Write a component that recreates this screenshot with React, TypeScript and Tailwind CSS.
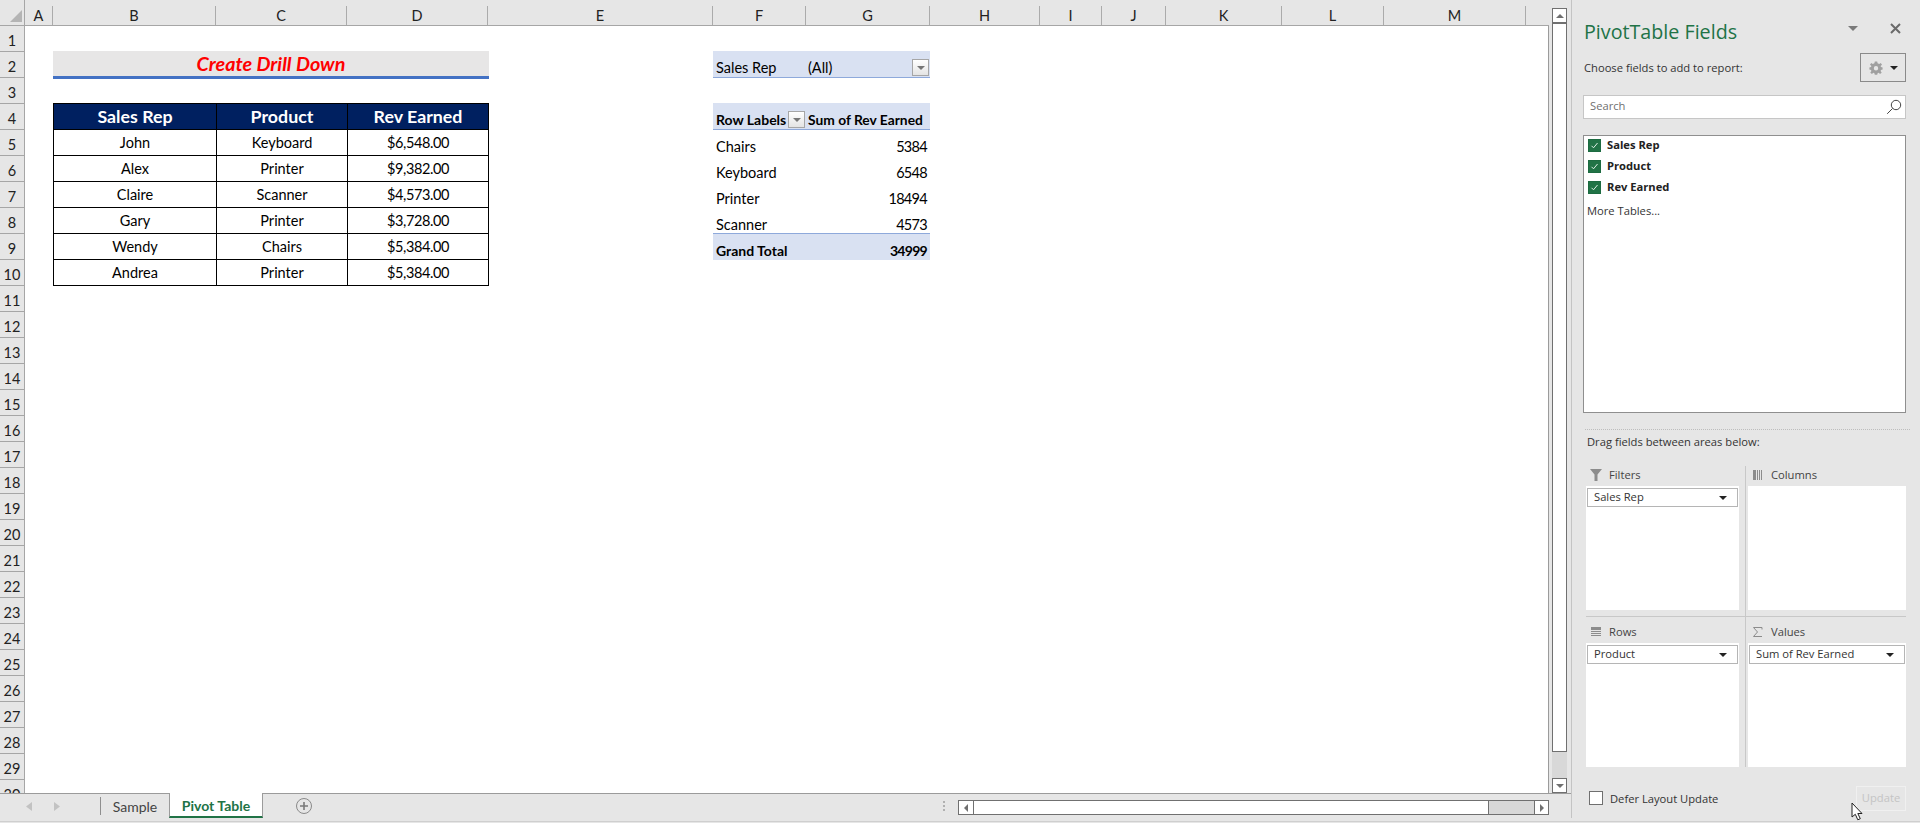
const calibri = "font-['Lato','Liberation_Sans',sans-serif]";
const segoe = "font-['Open_Sans','Noto_Sans',sans-serif]";

const columns = [
  { name: 'A', width: 28 },
  { name: 'B', width: 163 },
  { name: 'C', width: 131 },
  { name: 'D', width: 141 },
  { name: 'E', width: 225 },
  { name: 'F', width: 93 },
  { name: 'G', width: 124 },
  { name: 'H', width: 110 },
  { name: 'I', width: 62 },
  { name: 'J', width: 64 },
  { name: 'K', width: 116 },
  { name: 'L', width: 102 },
  { name: 'M', width: 142 },
];

const rows = Array.from({ length: 30 }, (_, i) => i + 1);

const sales = [
  ['John', 'Keyboard', '$6,548.00'],
  ['Alex', 'Printer', '$9,382.00'],
  ['Claire', 'Scanner', '$4,573.00'],
  ['Gary', 'Printer', '$3,728.00'],
  ['Wendy', 'Chairs', '$5,384.00'],
  ['Andrea', 'Printer', '$5,384.00'],
];

const pivot = [
  ['Chairs', '5384'],
  ['Keyboard', '6548'],
  ['Printer', '18494'],
  ['Scanner', '4573'],
];

const FilterButton = () => (
  <span className="flex h-[17px] w-[17px] shrink-0 items-center justify-center border border-[#a6a6a6] bg-gradient-to-b from-white to-[#e4e4e4]">
    <span className="h-0 w-0 border-x-[4px] border-t-[4px] border-x-transparent border-t-[#767676]" />
  </span>
);

const Caret = ({ color = 'border-t-[#222]' }: { color?: string }) => (
  <span className={`h-0 w-0 shrink-0 border-x-[4px] border-t-[4px] border-x-transparent ${color}`} />
);

const ScrollArrow = ({ dir }: { dir: 'up' | 'down' | 'left' | 'right' }) => {
  const points = {
    up: '1,7 9,7 5,3',
    down: '1,3 9,3 5,7',
    left: '7,1 7,9 3,5',
    right: '3,1 3,9 7,5',
  }[dir];
  return (
    <svg width="10" height="10" viewBox="0 0 10 10">
      <polygon points={points} fill="#6f6f6f" />
    </svg>
  );
};

const Gear = () => (
  <svg width="14" height="14" viewBox="0 0 14 14">
    <path
      d="M5.8 0.5 H8.2 L8.6 2.3 L10.2 3 L11.8 2 L13 3.7 L11.6 5 L12 6 L13.6 6.5 V8.5 L12 9 L11.6 10 L12.7 11.7 L11 13 L9.8 11.8 L8.6 12.3 L8.2 13.8 H5.8 L5.4 12.3 L4.2 11.8 L3 13 L1.3 11.7 L2.4 10 L2 9 L0.4 8.5 V6.5 L2 6 L2.4 5 L1 3.7 L2.2 2 L3.8 3 L5.4 2.3 Z M7 5 A2.2 2.2 0 1 0 7 9.4 A2.2 2.2 0 1 0 7 5 Z"
      fill="#a0a0a0"
      fillRule="evenodd"
    />
  </svg>
);

const FieldCheck = ({ label }: { label: string }) => (
  <div className="flex h-[21px] items-center gap-[6px] pl-[4px]">
    <span className="flex h-[13px] w-[13px] items-center justify-center border border-[#1d6b41] bg-[#217346]">
      <svg width="9" height="9" viewBox="0 0 9 9" fill="none">
        <path d="M1.5 4.8 L3.5 6.8 L7.5 2" stroke="#dff0e6" strokeWidth="1" />
      </svg>
    </span>
    <span className="text-[11.2px] font-bold text-[#222]">{label}</span>
  </div>
);

const AreaItem = ({ label }: { label: string }) => (
  <div className="mx-[1px] mt-[2px] flex h-[19px] items-center justify-between border border-[#b5b5b5] bg-white pl-[6px] pr-[10px] text-[11.2px] text-[#333]">
    <span>{label}</span>
    <Caret />
  </div>
);

const AreaBox = ({
  icon,
  title,
  item,
  className,
}: {
  icon: React.ReactNode;
  title: string;
  item?: string;
  className: string;
}) => (
  <div className={`flex flex-col ${className}`}>
    <div className="flex h-[20px] shrink-0 items-center gap-[7px] pb-[2px] pl-[4px] text-[11.2px] text-[#444]">
      <span className="flex w-[12px] justify-center">{icon}</span>
      <span>{title}</span>
    </div>
    <div className="flex-1 bg-white">{item && <AreaItem label={item} />}</div>
  </div>
);

const PivotPanel = () => (
  <aside className={`flex h-[818px] w-[349px] shrink-0 flex-col border-l border-[#c4c4c4] pl-[12px] ${segoe} text-[#333]`}>
    <div className="flex h-[53px] shrink-0 items-center justify-between pr-[19px] pt-[11px]">
      <span className="text-[19.7px] text-[#217346]">PivotTable Fields</span>
      <div className="flex items-center gap-[32px] pb-[8px]">
        <span className="h-0 w-0 border-x-[5px] border-t-[5px] border-x-transparent border-t-[#7a7a7a]" />
        <svg width="11" height="11" viewBox="0 0 11 11">
          <path d="M1 1 L10 10 M10 1 L1 10" stroke="#6a6a6a" strokeWidth="2" />
        </svg>
      </div>
    </div>
    <div className="flex h-[29px] shrink-0 items-center justify-between pr-[14px]">
      <span className="pt-[1px] text-[11.2px]">Choose fields to add to report:</span>
      <div className="flex h-[29px] w-[46px] items-center justify-center gap-[7px] border border-[#8a8a8a]">
        <Gear />
        <Caret />
      </div>
    </div>
    <div className="mt-[13px] -ml-[1px] mr-[14px] flex h-[24px] shrink-0 items-center justify-between border border-[#c6c6c6] bg-white pl-[6px] pr-[3px]">
      <span className="pb-[2px] text-[11.2px] text-[#6f6f6f]">Search</span>
      <svg width="16" height="16" viewBox="0 0 16 16" fill="none">
        <circle cx="10" cy="6" r="4.7" stroke="#444" strokeWidth="1" />
        <path d="M6.6 9.4 L1.2 14.8" stroke="#444" strokeWidth="1" />
      </svg>
    </div>
    <div className="mt-[16px] -ml-[1px] mr-[14px] h-[278px] shrink-0 border border-[#8f8f8f] bg-white">
      <div className="-mt-[1px]">
        <FieldCheck label="Sales Rep" />
        <FieldCheck label="Product" />
        <FieldCheck label="Rev Earned" />
      </div>
      <div className="mt-[5px] pl-[3px] text-[11.2px] text-[#333]">More Tables...</div>
    </div>
    <div className="mt-[16px] ml-[1px] mr-[10px] shrink-0 border-t border-dotted border-[#bdbdbd]" />
    <div className="flex h-[24px] shrink-0 items-center pl-[3px] text-[11.2px]">Drag fields between areas below:</div>
    <div className="mt-[12px] mr-[14px] grid h-[301px] shrink-0 grid-cols-[160px_160px] grid-rows-[150px_151px] pl-[2px]">
      <AreaBox
        title="Filters"
        item="Sales Rep"
        className="border-r border-[#c8c8c8] pr-[6px] pb-[6px]"
        icon={
          <svg width="12" height="12" viewBox="0 0 12 12">
            <path d="M0 0 H12 L7.5 5.5 V12 H4.5 V5.5 Z" fill="#8c8c8c" />
          </svg>
        }
      />
      <AreaBox
        title="Columns"
        className="pl-[2px] pb-[6px]"
        icon={
          <svg width="10" height="10" viewBox="0 0 10 10">
            <path d="M0 0 H3 V10 H0 Z M4 0 H5 V10 H4 Z M6 0 H7 V10 H6 Z M8 0 H9 V10 H8 Z" fill="#8c8c8c" />
          </svg>
        }
      />
      <AreaBox
        title="Rows"
        item="Product"
        className="border-t-[1px] border-r border-[#c8c8c8] pr-[6px] pt-[6px]"
        icon={
          <svg width="10" height="10" viewBox="0 0 10 10">
            <path d="M0 0 H10 V3 H0 Z M0 4 H10 V5 H0 Z M0 6 H10 V7 H0 Z M0 8 H10 V9 H0 Z" fill="#8c8c8c" />
          </svg>
        }
      />
      <AreaBox
        title="Values"
        item="Sum of Rev Earned"
        className="border-t-[1px] border-[#c8c8c8] pl-[2px] pt-[6px]"
        icon={
          <svg width="10" height="10" viewBox="0 0 10 10">
            <path d="M0.5 0.5 H9 V2.5 M9 9.5 H0.5 L4.5 5 L0.5 0.5" stroke="#8c8c8c" strokeWidth="1" fill="none" />
          </svg>
        }
      />
    </div>
    <div className="mt-[19px] flex h-[25px] shrink-0 items-center justify-between pr-[14px] pl-[5px]">
      <div className="flex items-center gap-[7px]">
        <span className="h-[14px] w-[14px] border border-[#6f6f6f] bg-white" />
        <span className="pt-[1px] text-[11.2px]">Defer Layout Update</span>
      </div>
      <div className="relative flex h-[25px] w-[50px] items-center justify-center border border-[#f0f0f0] bg-[#e6e6e6] text-[11.2px] text-[#c4c4c4]">
        Update
        <svg className="absolute -left-[6px] top-[15px]" width="13" height="19" viewBox="0 0 13 19">
          <path d="M1 1 V15 L4.3 12.3 L6.8 17.8 L9.3 16.7 L6.8 11.5 H11 Z" fill="#fff" stroke="#222" strokeWidth="1" />
        </svg>
      </div>
    </div>
  </aside>
);

const Sheet = () => (
  <div
    className={`grid h-[793px] w-[1549px] grid-rows-[26px_repeat(30,26px)] overflow-hidden bg-white text-[14.5px] text-black ${calibri}`}
    style={{ gridTemplateColumns: `25px ${columns.map((c) => `${c.width}px`).join(' ')} 1fr` }}
  >
    <div className="flex items-end border-r border-b border-[#a6a6a6] bg-[#e6e6e6]">
      <svg className="ml-[10px] mb-[3px]" width="12" height="12" viewBox="0 0 12 12">
        <polygon points="12,0 12,12 0,12" fill="#b4b4b4" />
      </svg>
    </div>
    {columns.map((c) => (
      <div key={c.name} className="border-b border-[#a6a6a6] bg-[#e6e6e6] pt-[6px]">
        <div className="flex h-[19px] items-center justify-center border-r border-[#ababab] text-[#222]">{c.name}</div>
      </div>
    ))}
    <div className="border-b border-[#a6a6a6] bg-[#e6e6e6]" />

    {rows.map((r) => (
      <div
        key={r}
        style={{ gridRow: r + 1 }}
        className="col-start-1 flex items-end justify-center border-r border-b border-[#a6a6a6] bg-[#e6e6e6] pb-[1px] leading-[18px] text-[#222]"
      >
        {r}
      </div>
    ))}
    <div className="col-start-15 row-start-2 row-span-30 border-r border-[#9b9b9b]" />

    {/* title */}
    <div className="col-start-3 col-end-6 row-start-3 -mt-[1px] flex h-[28px] w-[436px] items-center justify-center border-b-[3px] border-[#4472c4] bg-[#e7e6e6] text-[19.8px] font-bold italic text-[#ff0000]">
      Create Drill Down
    </div>

    {/* sales table */}
    <div className="col-start-3 col-end-6 row-start-5 row-end-12 -mt-[1px] grid h-[183px] w-[436px] grid-cols-[163px_131px_141px] grid-rows-[repeat(7,26px)] border-t border-l border-black">
      {['Sales Rep', 'Product', 'Rev Earned'].map((h) => (
        <div key={h} className="flex items-center justify-center border-r border-b border-black bg-[#002060] text-[17.8px] font-bold text-white">
          {h}
        </div>
      ))}
      {sales.flat().map((v, i) => (
        <div key={i} className={`flex items-center justify-center border-r border-b border-black ${i % 3 === 2 ? 'tracking-[-0.4px]' : ''}`}>
          {v}
        </div>
      ))}
    </div>

    {/* report filter */}
    <div className="col-start-7 col-end-9 row-start-3 -mt-[1px] flex items-end border-b border-[#8ea9db] bg-[#d9e1f2] pb-[1px] pl-[3px] pr-[1px] leading-[16px]">
      <span className="w-[92px]">Sales Rep</span>
      <span className="flex-1">(All)</span>
      <FilterButton />
    </div>

    {/* pivot table */}
    <div className="col-start-7 col-end-9 row-start-5 -mt-[1px] flex items-end border-b border-[#8ea9db] bg-[#d9e1f2] pb-[1px] pl-[3px] font-bold leading-[16px] whitespace-nowrap">
      <span className="w-[72px] text-[14px]">Row Labels</span>
      <FilterButton />
      <span className="pl-[3px] text-[13.8px]">Sum of Rev Earned</span>
    </div>
    {pivot.map(([label, value], i) => (
      <div
        key={label}
        style={{ gridRow: i + 6 }}
        className="col-start-7 col-end-9 flex items-end justify-between px-[3px] pb-[1px] leading-[16px]"
      >
        <span>{label}</span>
        <span className="tracking-[-0.7px]">{value}</span>
      </div>
    ))}
    <div className="col-start-7 col-end-9 row-start-10 -mt-[1px] flex items-end justify-between border-t border-[#8ea9db] bg-[#d9e1f2] px-[3px] pb-[1px] text-[14px] font-bold leading-[16px]">
      <span>Grand Total</span>
      <span className="tracking-[-0.7px]">34999</span>
    </div>
  </div>
);

const TabBar = () => (
  <div className={`flex h-[25px] w-[1571px] shrink-0 items-stretch border-t border-[#9b9b9b] text-[14px] ${calibri}`}>
    <div className="my-[3px] flex w-[101px] items-center gap-[22px] border-r border-[#8f8f8f] pl-[26px]">
      <svg width="6" height="9" viewBox="0 0 6 9"><polygon points="6,0 6,9 0,4.5" fill="#c2c2c2" /></svg>
      <svg width="6" height="9" viewBox="0 0 6 9"><polygon points="0,0 0,9 6,4.5" fill="#c2c2c2" /></svg>
    </div>
    <div className="flex w-[68px] items-center justify-center pt-[1px] text-[#444]">Sample</div>
    <div className="-mt-[1px] flex w-[94px] items-center justify-center border-x border-b-[2px] border-x-[#9b9b9b] border-b-[#217346] bg-white pt-[1px] font-bold text-[#217346]">
      Pivot Table
    </div>
    <div className="ml-[33px] flex items-center">
      <span className="flex h-[16px] w-[16px] items-center justify-center rounded-full border-[1.5px] border-[#8a8a8a]">
        <svg width="8" height="8" viewBox="0 0 8 8"><path d="M4 0 V8 M0 4 H8" stroke="#7a7a7a" strokeWidth="1.6" /></svg>
      </span>
    </div>
    <div className="flex-1" />
    <div className="mr-[13px] flex flex-col justify-center gap-[2px]">
      <span className="h-[2px] w-[2px] bg-[#b0b0b0]" />
      <span className="h-[2px] w-[2px] bg-[#b0b0b0]" />
      <span className="h-[2px] w-[2px] bg-[#b0b0b0]" />
    </div>
    <div className="mt-[6px] mr-[22px] flex h-[15px] w-[591px] items-stretch border border-[#707070] bg-[#d8d8d8]">
      <div className="flex w-[14px] items-center justify-center bg-white"><ScrollArrow dir="left" /></div>
      <div className="w-[516px] border-x border-[#707070] bg-white" />
      <div className="flex-1" />
      <div className="flex w-[14px] items-center justify-center border-l border-[#707070] bg-white"><ScrollArrow dir="right" /></div>
    </div>
  </div>
);

const VerticalScroll = () => (
  <div className="ml-[3px] mr-[4px] flex h-[793px] w-[15px] flex-col bg-[#d8d8d8]">
    <div className="h-[8px] bg-[#e6e6e6]" />
    <div className="flex h-[15px] items-center justify-center border border-[#707070] bg-white"><ScrollArrow dir="up" /></div>
    <div className="h-[729px] border-x border-t border-b border-[#707070] bg-white" />
    <div className="flex-1" />
    <div className="flex h-[15px] items-center justify-center border border-[#707070] bg-white"><ScrollArrow dir="down" /></div>
  </div>
);

export default function App() {
  return (
    <div className="h-[823px] w-[1920px] overflow-hidden bg-[#e6e6e6]">
      <div className="flex h-[822px] border-b border-[#cfcfcf]">
        <div className="flex w-[1571px] shrink-0 flex-col">
          <div className="flex h-[793px] shrink-0">
            <Sheet />
            <VerticalScroll />
          </div>
          <TabBar />
        </div>
        <PivotPanel />
      </div>
    </div>
  );
}
